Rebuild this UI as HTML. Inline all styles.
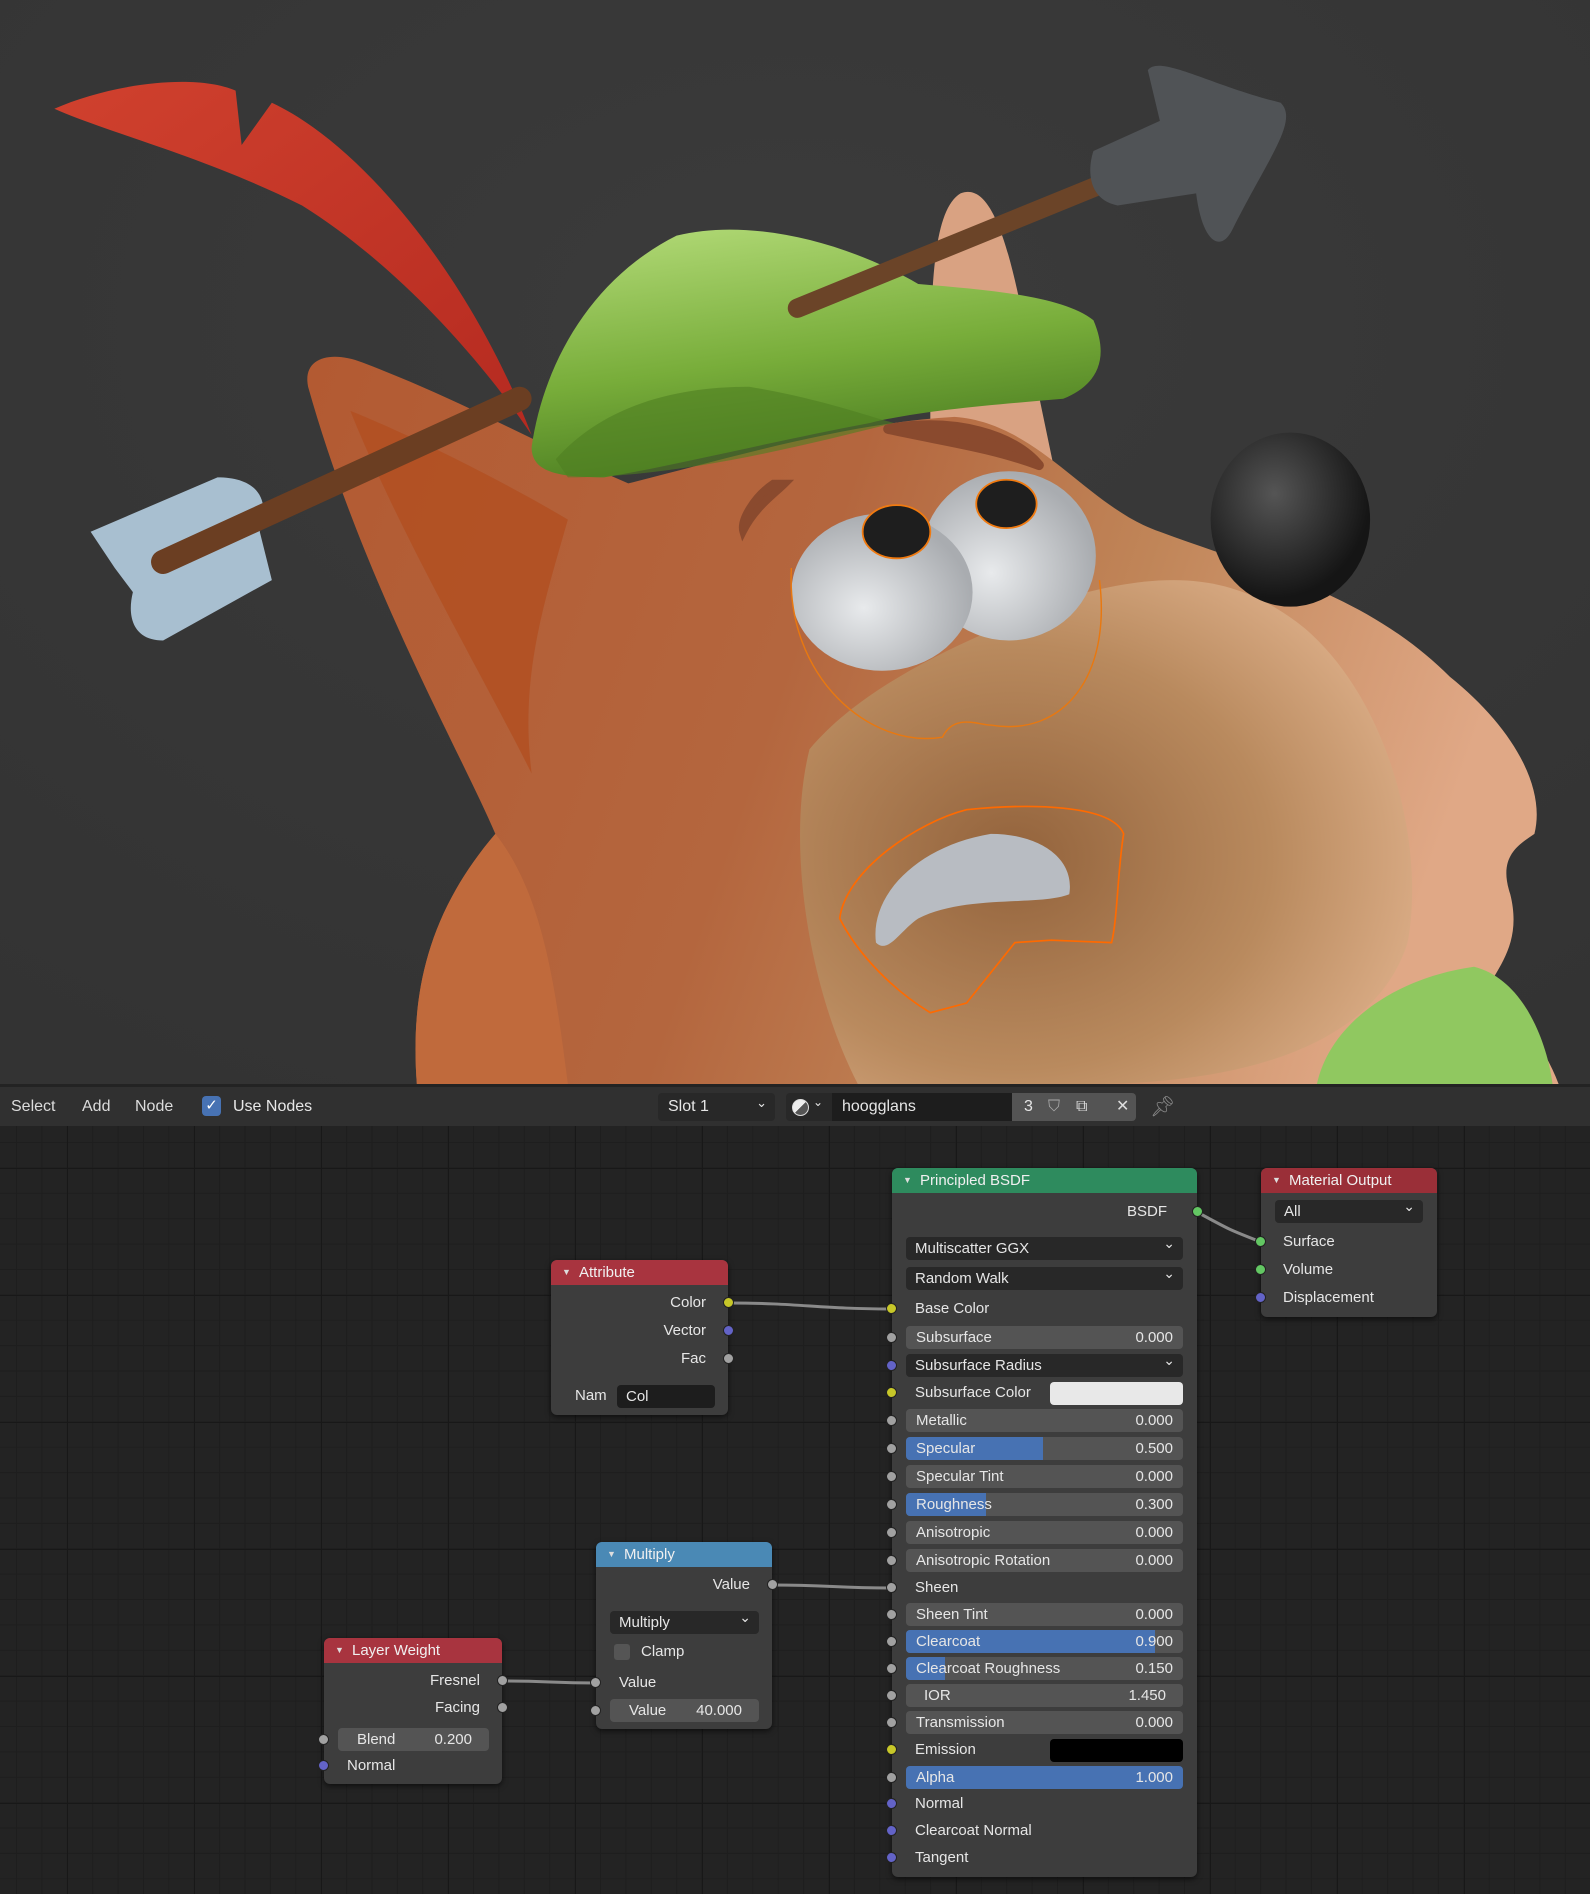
<!DOCTYPE html>
<html><head><meta charset="utf-8"><style>
*{margin:0;padding:0;box-sizing:border-box}
body{width:1590px;height:1894px;overflow:hidden;background:#232323;font-family:"Liberation Sans","DejaVu Sans",sans-serif;color:#e6e6e6;position:relative}
.abs{position:absolute}
#vp{position:absolute;left:0;top:0;width:1590px;height:1084px;background:#393939}
#hdr{position:absolute;left:0;top:1084px;width:1590px;height:42px;background:#303030;border-top:3px solid #232323}
#ed{position:absolute;left:0;top:1126px;width:1590px;height:768px;background-color:#232323;
background-image:linear-gradient(#181818 1px,transparent 1px),linear-gradient(90deg,#181818 1px,transparent 1px),linear-gradient(#1e1e1e 1px,transparent 1px),linear-gradient(90deg,#1e1e1e 1px,transparent 1px);
background-size:127px 127px,127px 127px,25.4px 25.4px,25.4px 25.4px;background-position:0 42px,67px 0,0 16px,16px 0}
.ht{position:absolute;top:11px;font-size:16px;color:#dcdcdc}
.node{position:absolute;background:#3d3d3d;border-radius:6px;box-shadow:0 2px 6px rgba(0,0,0,.6)}
.nh{position:absolute;left:0;right:0;top:0;height:25px;border-radius:6px 6px 0 0;font-size:15px;line-height:25px;padding-left:28px;color:#f0f0f0}
.nh:before{content:"▼";position:absolute;left:11px;font-size:9px;color:#ddd;top:0}
.lbl{position:absolute;font-size:15px;line-height:18px;white-space:nowrap}
.sock{position:absolute;width:11px;height:11px;border-radius:50%;background:#a1a1a1;border:1px solid #222}
.y{background:#c7c729}.b{background:#6363c7}.g{background:#63c763}
.fld{position:absolute;height:23px;border-radius:4px;background:#545454;font-size:15px;line-height:23px;padding:0 10px;overflow:hidden}
.fld .f{position:absolute;left:0;top:0;bottom:0;background:#4772b3}
.fld span{position:relative}
.fld .v{position:absolute;right:10px;top:0}
.dd{position:absolute;height:23px;border-radius:4px;background:#282828;font-size:15px;line-height:23px;padding:0 9px}
.dd:after{content:"⌄";position:absolute;right:8px;top:-5px;font-size:14px}
</style></head><body>
<div id="vp">
<svg width="1590" height="1084" viewBox="0 0 1316 897" preserveAspectRatio="none">
<defs>
<linearGradient id="face" x1="0" y1="0" x2="1" y2="0.2"><stop offset="0" stop-color="#b35a32"/><stop offset=".45" stop-color="#b4663e"/><stop offset=".7" stop-color="#c08558"/><stop offset="1" stop-color="#e0a886"/></linearGradient>
<radialGradient id="snout" cx=".35" cy=".55" r=".7"><stop offset="0" stop-color="#93633c"/><stop offset=".6" stop-color="#b98a5e"/><stop offset="1" stop-color="#dcae88"/></radialGradient>
<linearGradient id="hat" x1="0" y1="0" x2=".3" y2="1"><stop offset="0" stop-color="#b5dc7a"/><stop offset=".6" stop-color="#78ad3a"/><stop offset="1" stop-color="#4d7f22"/></linearGradient>
<linearGradient id="feat" x1="0" y1="0" x2="1" y2="1"><stop offset="0" stop-color="#d0412e"/><stop offset="1" stop-color="#b52a20"/></linearGradient>
<radialGradient id="eye" cx=".4" cy=".6" r=".6"><stop offset="0" stop-color="#e8eaec"/><stop offset="1" stop-color="#a9acb0"/></radialGradient>
<radialGradient id="nose" cx=".4" cy=".35" r=".6"><stop offset="0" stop-color="#555"/><stop offset="1" stop-color="#151515"/></radialGradient>
<radialGradient id="bg" cx=".5" cy=".3" r=".8"><stop offset="0" stop-color="#3b3b3b"/><stop offset="1" stop-color="#333"/></radialGradient>
</defs>
<rect width="1316" height="897" fill="url(#bg)"/>
<path d="M770 350 C770 250 770 175 795 160 C820 150 835 200 850 280 L875 400 Z" fill="#d9a282"/>
<path d="M345 897 C340 830 350 760 410 690 C380 620 300 480 255 320 C250 295 275 290 300 300 C380 330 450 370 520 400 C600 380 700 350 790 345 C860 350 900 420 960 440 C1040 470 1130 490 1200 560 C1250 600 1280 650 1270 690 C1255 700 1240 710 1250 740 C1260 780 1240 800 1230 820 C1260 840 1280 870 1290 897 Z" fill="url(#face)"/>
<path d="M290 340 C340 360 420 400 470 430 C450 500 430 560 440 640 C400 560 330 440 290 340 Z" fill="#b14f20" opacity=".8"/>
<path d="M670 620 C720 560 820 520 900 490 C980 470 1030 480 1080 520 C1150 580 1180 700 1165 780 C1140 860 1040 897 900 897 L710 897 C670 820 650 700 670 620 Z" fill="url(#snout)"/>
<path d="M410 690 C450 740 460 820 470 897 L345 897 C340 830 350 760 410 690 Z" fill="#c06a3c"/>
<path d="M45 90 C90 70 160 60 195 75 L200 120 L225 85 C300 120 390 230 440 360 C400 300 330 220 250 170 C170 130 90 110 45 90 Z" fill="url(#feat)"/>
<path d="M75 440 L180 395 C210 395 225 410 215 440 L225 480 L135 530 C110 530 105 510 110 490 L95 470 Z" fill="#a8bfd0"/>
<line x1="135" y1="465" x2="430" y2="330" stroke="#6b3e22" stroke-width="20" stroke-linecap="round"/>
<path d="M440 370 C450 300 490 230 560 195 C620 180 700 200 760 235 C820 240 880 245 905 265 C920 300 905 320 880 330 C820 335 760 340 720 350 C640 365 560 385 500 395 C460 395 440 390 440 370 Z" fill="url(#hat)"/>
<path d="M460 380 C500 335 560 320 620 320 C680 330 720 345 740 350 C660 370 560 395 470 395 Z" fill="#4e7e22" opacity=".6"/>
<line x1="660" y1="255" x2="930" y2="145" stroke="#6b4428" stroke-width="16" stroke-linecap="round"/>
<path d="M905 125 L960 100 L950 58 C960 45 1000 70 1060 85 C1075 100 1050 130 1020 190 C1010 210 995 200 990 160 L925 170 C900 165 900 140 905 125 Z" fill="#505356"/>
<path d="M735 355 C790 345 840 360 860 385 C820 370 780 365 735 355 Z" fill="#8a4a2e" stroke="#8a4a2e" stroke-width="8" stroke-linejoin="round"/>
<path d="M640 400 C625 410 612 430 615 440 C625 420 640 410 650 400 Z" fill="#8a4a2e" stroke="#8a4a2e" stroke-width="6"/>
<ellipse cx="835" cy="460" rx="72" ry="70" fill="url(#eye)"/>
<ellipse cx="730" cy="490" rx="75" ry="65" fill="url(#eye)"/>
<path d="M655 470 C650 560 720 620 780 610 C790 590 810 600 820 600 C880 610 920 560 910 480" fill="none" stroke="#e87810" stroke-width="1.2"/>
<ellipse cx="742" cy="440" rx="28" ry="22" fill="#1e1e1e" stroke="#f07a10" stroke-width="1.5"/>
<ellipse cx="833" cy="417" rx="25" ry="20" fill="#1e1e1e" stroke="#f07a10" stroke-width="1.5"/>
<ellipse cx="1068" cy="430" rx="66" ry="72" fill="url(#nose)"/>
<path d="M725 780 C720 740 760 700 820 690 C860 690 890 710 885 740 C860 750 800 740 760 760 C745 770 735 790 725 780 Z" fill="#b8bcc2"/>
<path d="M695 760 C700 720 760 680 800 670 C850 665 920 665 930 690 C925 720 925 760 920 780 L870 778 L840 780 L800 830 L770 838 C740 820 710 790 695 760 Z" fill="none" stroke="#ff6a00" stroke-width="1.4"/>
<path d="M1090 897 C1100 850 1150 810 1220 800 C1260 810 1280 860 1285 897 Z" fill="#90c860"/>
</svg>
</div>
<div id="hdr">
<span class="ht" style="left:11px">Select</span>
<span class="ht" style="left:82px">Add</span>
<span class="ht" style="left:135px">Node</span>
<div class="abs" style="left:202px;top:9px;width:19px;height:20px;border-radius:4px;background:#4772b3;color:#fff;font-size:15px;text-align:center;line-height:20px">✓</div>
<span class="ht" style="left:233px;color:#e8e8e8">Use Nodes</span>
<div class="abs" style="left:658px;top:6px;width:117px;height:28px;border-radius:4px;background:#282828;font-size:16px;line-height:28px;padding-left:10px">Slot 1<span style="position:absolute;right:8px;top:-4px;font-size:13px">⌄</span></div>
<div class="abs" style="left:786px;top:6px;width:46px;height:28px;border-radius:4px 0 0 4px;background:#282828"><div class="abs" style="left:6px;top:6px;width:17px;height:17px;border-radius:50%;background:linear-gradient(135deg,#eee 50%,#555 50%);border:1px solid #ddd"></div><span style="position:absolute;left:27px;top:2px;font-size:12px">⌄</span></div>
<div class="abs" style="left:832px;top:6px;width:180px;height:28px;background:#1d1d1d;font-size:16px;line-height:28px;padding-left:10px">hoogglans</div>
<div class="abs" style="left:1012px;top:6px;width:124px;height:28px;border-radius:0 4px 4px 0;background:#545454;font-size:16px;line-height:28px">
<span style="position:absolute;left:12px">3</span>
<span style="position:absolute;left:36px;top:0;color:#aaa">⛉</span>
<span style="position:absolute;left:64px;color:#ddd">⧉</span>
<span style="position:absolute;left:104px;color:#ddd">✕</span></div>
<span class="ht" style="left:1150px;color:#888;top:7px;font-size:20px">📌︎</span>
</div>
<div id="ed"></div>
<svg class="abs" style="left:0;top:0" width="1590" height="1894">
<g stroke="#8a8a8a" stroke-width="3" fill="none">
<path d="M728 1303 C800 1303 820 1309 892 1309"/>
<path d="M772 1585 C830 1585 835 1588 892 1588"/>
<path d="M502 1681 C550 1681 550 1683 596 1683"/>
<path d="M1197 1212 C1230 1230 1230 1230 1261 1242"/>
</g></svg>

<div class="node" style="left:892px;top:1168px;width:305px;height:709px">
<div class="nh" style="background:#2e8b5e">Principled BSDF</div>
<div class="lbl" style="right:30px;top:35px">BSDF</div>
<div class="sock g" style="right:-6px;top:38px"></div>
<div class="dd" style="left:14px;right:14px;top:69px">Multiscatter GGX</div>
<div class="dd" style="left:14px;right:14px;top:99px">Random Walk</div>
<div class="lbl" style="left:23px;top:132px">Base Color</div><div class="sock y" style="left:-6px;top:135px"></div>
<div class="fld" style="left:14px;right:14px;top:158px"><span>Subsurface</span><span class="v">0.000</span></div><div class="sock" style="left:-6px;top:164px"></div>
<div class="dd" style="left:14px;right:14px;top:186px">Subsurface Radius</div><div class="sock b" style="left:-6px;top:192px"></div>
<div class="lbl" style="left:23px;top:216px">Subsurface Color</div><div class="sock y" style="left:-6px;top:219px"></div>
<div class="abs" style="left:158px;right:14px;top:214px;height:23px;border-radius:4px;background:#e8e8e8"></div>
<div class="fld" style="left:14px;right:14px;top:241px"><span>Metallic</span><span class="v">0.000</span></div><div class="sock" style="left:-6px;top:247px"></div>
<div class="fld" style="left:14px;right:14px;top:269px"><div class="f" style="width:49.5%"></div><span>Specular</span><span class="v">0.500</span></div><div class="sock" style="left:-6px;top:275px"></div>
<div class="fld" style="left:14px;right:14px;top:297px"><span>Specular Tint</span><span class="v">0.000</span></div><div class="sock" style="left:-6px;top:303px"></div>
<div class="fld" style="left:14px;right:14px;top:325px"><div class="f" style="width:29%"></div><span>Roughness</span><span class="v">0.300</span></div><div class="sock" style="left:-6px;top:331px"></div>
<div class="fld" style="left:14px;right:14px;top:353px"><span>Anisotropic</span><span class="v">0.000</span></div><div class="sock" style="left:-6px;top:359px"></div>
<div class="fld" style="left:14px;right:14px;top:381px"><span>Anisotropic Rotation</span><span class="v">0.000</span></div><div class="sock" style="left:-6px;top:387px"></div>
<div class="lbl" style="left:23px;top:411px">Sheen</div><div class="sock" style="left:-6px;top:414px"></div>
<div class="fld" style="left:14px;right:14px;top:435px"><span>Sheen Tint</span><span class="v">0.000</span></div><div class="sock" style="left:-6px;top:441px"></div>
<div class="fld" style="left:14px;right:14px;top:462px"><div class="f" style="width:90%"></div><span>Clearcoat</span><span class="v">0.900</span></div><div class="sock" style="left:-6px;top:468px"></div>
<div class="fld" style="left:14px;right:14px;top:489px"><div class="f" style="width:14%"></div><span>Clearcoat Roughness</span><span class="v">0.150</span></div><div class="sock" style="left:-6px;top:495px"></div>
<div class="fld" style="left:14px;right:14px;top:516px;padding-left:18px"><span>IOR</span><span class="v" style="right:17px">1.450</span></div><div class="sock" style="left:-6px;top:522px"></div>
<div class="fld" style="left:14px;right:14px;top:543px"><span>Transmission</span><span class="v">0.000</span></div><div class="sock" style="left:-6px;top:549px"></div>
<div class="lbl" style="left:23px;top:573px">Emission</div><div class="sock y" style="left:-6px;top:576px"></div>
<div class="abs" style="left:158px;right:14px;top:571px;height:23px;border-radius:4px;background:#000"></div>
<div class="fld" style="left:14px;right:14px;top:598px;background:#4772b3"><span>Alpha</span><span class="v">1.000</span></div><div class="sock" style="left:-6px;top:604px"></div>
<div class="lbl" style="left:23px;top:627px">Normal</div><div class="sock b" style="left:-6px;top:630px"></div>
<div class="lbl" style="left:23px;top:654px">Clearcoat Normal</div><div class="sock b" style="left:-6px;top:657px"></div>
<div class="lbl" style="left:23px;top:681px">Tangent</div><div class="sock b" style="left:-6px;top:684px"></div>
</div>

<div class="node" style="left:1261px;top:1168px;width:176px;height:149px">
<div class="nh" style="background:#9a2f38">Material Output</div>
<div class="dd" style="left:14px;right:14px;top:32px">All</div>
<div class="lbl" style="left:22px;top:65px">Surface</div><div class="sock g" style="left:-6px;top:68px"></div>
<div class="lbl" style="left:22px;top:93px">Volume</div><div class="sock g" style="left:-6px;top:96px"></div>
<div class="lbl" style="left:22px;top:121px">Displacement</div><div class="sock b" style="left:-6px;top:124px"></div>
</div>

<div class="node" style="left:551px;top:1260px;width:177px;height:155px">
<div class="nh" style="background:#a8343f">Attribute</div>
<div class="lbl" style="right:22px;top:34px">Color</div><div class="sock y" style="right:-6px;top:37px"></div>
<div class="lbl" style="right:22px;top:62px">Vector</div><div class="sock b" style="right:-6px;top:65px"></div>
<div class="lbl" style="right:22px;top:90px">Fac</div><div class="sock" style="right:-6px;top:93px"></div>
<div class="lbl" style="left:24px;top:127px">Nam</div>
<div class="abs" style="left:66px;width:98px;top:125px;height:23px;border-radius:4px;background:#1d1d1d;font-size:15px;line-height:23px;padding-left:9px">Col</div>
</div>

<div class="node" style="left:596px;top:1542px;width:176px;height:187px">
<div class="nh" style="background:#4a89b5">Multiply</div>
<div class="lbl" style="right:22px;top:34px">Value</div><div class="sock" style="right:-6px;top:37px"></div>
<div class="dd" style="left:14px;right:13px;top:69px">Multiply</div>
<div class="abs" style="left:18px;top:102px;width:16px;height:16px;border-radius:3px;background:#555"></div>
<div class="lbl" style="left:45px;top:101px">Clamp</div>
<div class="lbl" style="left:23px;top:132px">Value</div><div class="sock" style="left:-6px;top:135px"></div>
<div class="fld" style="left:14px;right:13px;top:157px;padding-left:19px"><span>Value</span><span class="v" style="right:17px">40.000</span></div><div class="sock" style="left:-6px;top:163px"></div>
</div>

<div class="node" style="left:324px;top:1638px;width:178px;height:146px">
<div class="nh" style="background:#a8343f">Layer Weight</div>
<div class="lbl" style="right:22px;top:34px">Fresnel</div><div class="sock" style="right:-6px;top:37px"></div>
<div class="lbl" style="right:22px;top:61px">Facing</div><div class="sock" style="right:-6px;top:64px"></div>
<div class="fld" style="left:14px;right:13px;top:90px;padding-left:19px"><span>Blend</span><span class="v" style="right:17px">0.200</span></div><div class="sock" style="left:-6px;top:96px"></div>
<div class="lbl" style="left:23px;top:119px">Normal</div><div class="sock b" style="left:-6px;top:122px"></div>
</div>
</body></html>
